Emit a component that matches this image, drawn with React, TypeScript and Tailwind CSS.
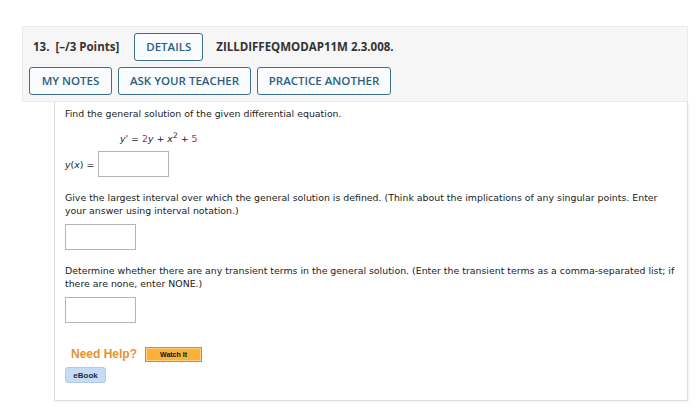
import React from "react";

const headBtn =
  "h-[28px] px-[11px] flex items-center whitespace-nowrap border-[1.5px] border-[#3b6f8c] rounded-[3px] bg-[#fafbfc] text-[#2b5f80] text-[11.5px] font-semibold";

const AnswerBox = ({ w = "w-[71px]" }: { w?: string }) => (
  <div className={`${w} h-[26px] border border-[#b5b5b5] bg-white`} />
);

const App = () => {
  return (
    <div className="w-[700px] h-[413px] bg-white pt-[26px] pl-[22px] overflow-hidden">
      <div className="w-[666px] font-['Open_Sans',sans-serif]">
        {/* question header */}
        <div className="bg-[#f6f6f6] border border-[#ebebeb] pt-[6px] pb-[6px] pl-[6px]">
          <div className="flex items-center h-[28px] pl-[4px]">
            <span className="text-[11.5px] font-bold text-[#333] whitespace-nowrap">13.&nbsp; [–/3 Points]</span>
            <div className={`${headBtn} ml-[15px]`}>DETAILS</div>
            <span className="ml-[13px] text-[11.5px] font-bold text-[#333]">ZILLDIFFEQMODAP11M 2.3.008.</span>
          </div>
          <div className="flex items-center gap-[6px] mt-[6px]">
            <div className={`${headBtn} w-[83px] justify-center`}>MY NOTES</div>
            <div className={`${headBtn} w-[133px] justify-center`}>ASK YOUR TEACHER</div>
            <div className={`${headBtn} w-[134px] justify-center`}>PRACTICE ANOTHER</div>
          </div>
        </div>

        {/* question body */}
        <div className="ml-[32px] h-[299px] bg-white border border-t-0 border-[#dedede] shadow-[1px_1px_2px_rgba(0,0,0,0.06)] pl-[10px] pt-[5px] font-['DejaVu_Sans',sans-serif] text-[9.4px] leading-[13px] text-[#222]">
          <p>Find the general solution of the given differential equation.</p>
          <p className="mt-[12px] pl-[55px]">
            <i>y</i>' = <span className="text-[#c0282d]">2</span>
            <i>y</i> + <i>x</i>
            <sup className="text-[7.5px]">2</sup> + <span className="text-[#c0282d]">5</span>
          </p>
          <div className="flex items-center mt-[6px]">
            <span className="w-[33px]">
              <i>y</i>(<i>x</i>) =
            </span>
            <AnswerBox />
          </div>
          <p className="mt-[14px] pr-[6px]">
            Give the largest interval over which the general solution is defined. (Think about the implications of any singular points. Enter your answer using interval notation.)
          </p>
          <div className="mt-[7px]">
            <AnswerBox />
          </div>
          <p className="mt-[14px] pr-[6px]">
            Determine whether there are any transient terms in the general solution. (Enter the transient terms as a comma-separated list; if there are none, enter NONE.)
          </p>
          <div className="mt-[7px]">
            <AnswerBox />
          </div>

          <div className="flex items-center mt-[24px] pl-[6px]">
            <span className="font-['Liberation_Sans',sans-serif] font-bold text-[12px] text-[#e8922e]">Need Help?</span>
            <div className="ml-[8px] w-[57px] h-[15px] flex items-center justify-center bg-[#fbb03b] border border-[#d9892a] shadow-[inset_0_0_0_1px_#fcd27f] font-['Liberation_Sans',sans-serif] font-bold text-[7px] text-[#111]">
              Watch It
            </div>
          </div>
          <div className="mt-[5px] w-[41px] h-[16px] flex items-center justify-center rounded-[3px] bg-[#c6dcf4] border border-[#b0cbe8] font-['Liberation_Sans',sans-serif] font-bold text-[8px] text-[#1a2a44]">
            eBook
          </div>
        </div>
      </div>
    </div>
  );
};

export default App;
